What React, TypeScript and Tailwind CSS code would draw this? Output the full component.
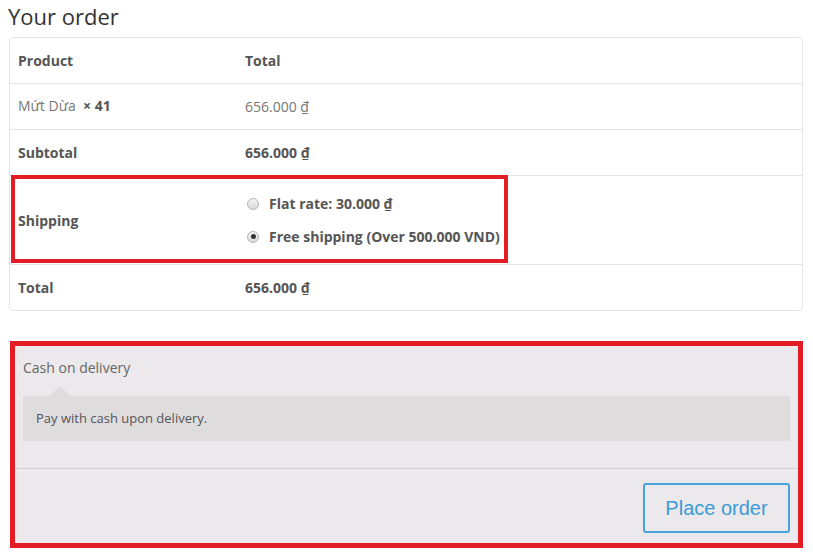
import React from "react";

const Radio = ({ checked }: { checked?: boolean }) => (
  <span className="relative inline-flex h-[12px] w-[12px] shrink-0 items-center justify-center rounded-full border border-[#b5b5b5] bg-gradient-to-b from-[#f4f4f4] to-[#d9d9d9]">
    {checked && <span className="h-[5px] w-[5px] rounded-full bg-[#333]" />}
  </span>
);

const Row = ({
  label,
  children,
  first,
}: {
  label: string;
  children: React.ReactNode;
  first?: boolean;
}) => (
  <div className={`flex items-center ${first ? "h-[45px]" : "h-[46px] border-t border-[#e6e6e6]"}`}>
    <div className="w-[227px] pl-[8px] font-bold text-[#555]">{label}</div>
    <div className="flex-1 pl-[8px]">{children}</div>
  </div>
);

export default function App() {
  return (
    <div className="min-h-[558px] bg-white pl-[9px] pr-[10px] font-['Open_Sans',sans-serif] text-[14px] text-[#555]">
      <h3 className="pt-[3px] text-[22px] leading-[26px] text-[#333] -ml-[1px]">Your order</h3>

      <div className="relative mt-[8px] rounded-[5px] border border-[#e6e6e6]">
        <Row label="Product" first>
          <span className="font-bold">Total</span>
        </Row>
        <Row label="">
          <span className="text-[#777]">656.000 ₫</span>
        </Row>
        <Row label="Subtotal">
          <span className="font-bold">656.000 ₫</span>
        </Row>
        <div className="flex h-[89px] items-center border-t border-[#e6e6e6]">
          <div className="w-[227px] pl-[8px] font-bold">Shipping</div>
          <div className="flex flex-1 flex-col gap-[12px] pl-[10px] font-bold">
            <label className="flex items-center gap-[10px] leading-[21px]">
              <Radio />
              Flat rate: 30.000 ₫
            </label>
            <label className="flex items-center gap-[10px] leading-[21px]">
              <Radio checked />
              Free shipping (Over 500.000 VND)
            </label>
          </div>
        </div>
        <Row label="Total">
          <span className="font-bold">656.000 ₫</span>
        </Row>

        {/* product line sits on top of the empty label cell */}
        <div className="absolute left-[8px] top-[57px] text-[#777]">
          Mứt Dừa&nbsp; <span className="font-bold text-[#555]">× 41</span>
        </div>

        <div className="pointer-events-none absolute left-[1px] top-[137px] h-[88px] w-[497px] border-4 border-[#e31d25]" />
      </div>

      <div className="mt-[30px] ml-[1px] border-[5px] border-[#e31d25] bg-[#ebe9eb]">
        <div className="px-[8px] pt-[8px] pb-[27px]">
          <div className="leading-[28px] text-[#666]">Cash on delivery</div>
          <div className="relative mt-[14px] bg-[#dfdcde] px-[13px] py-[13px] text-[13px] leading-[19px] text-[#555]">
            <span className="absolute -top-[10px] left-[26px] h-0 w-0 border-x-[11px] border-b-[10px] border-x-transparent border-b-[#dfdcde]" />
            Pay with cash upon delivery.
          </div>
        </div>
        <div className="flex justify-end border-t border-[#d3ced2] px-[8px] pt-[14px] pb-[10px]">
          <button className="h-[50px] w-[147px] rounded-[3px] border-2 border-[#4aa2dd] font-['Liberation_Sans',Arial,sans-serif] text-[20px] text-[#3d9ad8]">
            Place order
          </button>
        </div>
      </div>
    </div>
  );
}
